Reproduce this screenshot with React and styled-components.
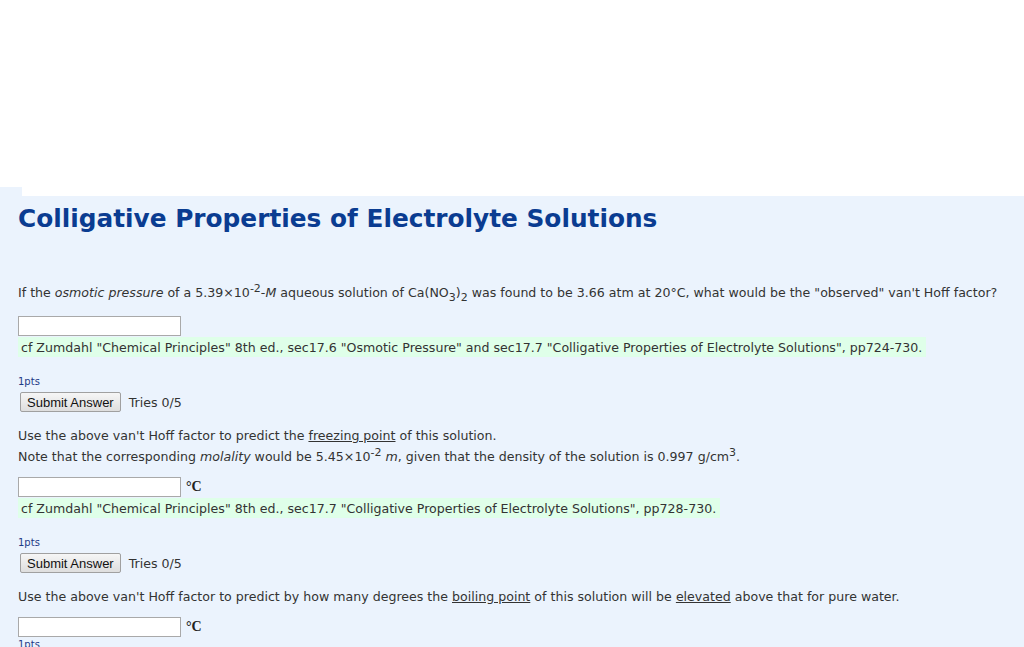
import styled, { createGlobalStyle } from "styled-components";

const Global = createGlobalStyle`
  html, body { margin: 0; padding: 0; background: #fff; }
  body { font-family: "DejaVu Sans", Verdana, sans-serif; color: #333; }
`;

const TopSpace = styled.div`
  height: 187px;
  background: #fff;
`;

const TabRow = styled.div`
  display: flex;
  height: 9px;
  span:first-child { width: 22px; background: #ebf3fd; }
  span:last-child { flex: 1; background: #fff; }
`;

const Panel = styled.div`
  background: #ebf3fd;
  padding: 8px 18px 20px;
  min-height: 500px;
`;

const Title = styled.h1`
  margin: 0 0 49px;
  font-size: 24.8px;
  line-height: 29px;
  font-weight: bold;
  color: #0a3c91;
`;

const Question = styled.div`
  font-size: 12.6px;
  line-height: 21px;
  margin-bottom: ${p => p.$gap || 10}px;
  i { font-style: italic; }
  u { text-decoration: underline; }
  sup, sub { font-size: 11px; line-height: 0; }
`;

const AnswerRow = styled.div`
  display: flex;
  align-items: center;
  gap: 5px;
  height: 20px;
`;

const Input = styled.input`
  width: 159px;
  height: 16px;
  border: 1px solid #a9a9a9;
  background: #fff;
  padding: 1px;
  margin: 0;
`;

const Unit = styled.span`
  font-family: "Liberation Serif", serif;
  font-weight: bold;
  font-size: 14px;
  color: #222;
`;

const Hint = styled.div`
  display: inline-block;
  background: #dfffe9;
  font-size: 12.6px;
  line-height: 20px;
  padding: 1px 4px 0 3px;
  height: 19px;
  margin-top: 1px;
  vertical-align: top;
`;

const Pts = styled.div`
  margin-top: ${p => p.$top ?? 18}px;
  font-size: 10px;
  color: #1d3a86;
  line-height: 14px;
`;

const SubmitRow = styled.div`
  display: flex;
  align-items: center;
  gap: 8px;
  margin: 3px 0 13px 2px;
`;

const Button = styled.button`
  font-family: "Liberation Sans", Arial, sans-serif;
  font-size: 13px;
  color: #111;
  height: 20px;
  padding: 0 6px;
  border: 1px solid #a0a0a0;
  border-radius: 2px;
  background: linear-gradient(#f6f6f6, #dedede);
`;

const Tries = styled.span`
  font-size: 12.6px;
`;

export default function App() {
  return (
    <>
      <Global />
      <TopSpace />
      <TabRow><span /><span /></TabRow>
      <Panel>
        <Title>Colligative Properties of Electrolyte Solutions</Title>

        <Question $gap={13}>
          If the <i>osmotic pressure</i> of a 5.39×10<sup>-2</sup>-<i>M</i> aqueous solution of Ca(NO<sub>3</sub>)<sub>2</sub> was found to be 3.66 atm at 20°C, what would be the "observed" van't Hoff factor?
        </Question>
        <AnswerRow><Input /></AnswerRow>
        <Hint>cf Zumdahl "Chemical Principles" 8th ed., sec17.6 "Osmotic Pressure" and sec17.7 "Colligative Properties of Electrolyte Solutions", pp724-730.</Hint>
        <Pts>1pts</Pts>
        <SubmitRow>
          <Button>Submit Answer</Button>
          <Tries>Tries 0/5</Tries>
        </SubmitRow>

        <Question>
          Use the above van't Hoff factor to predict the <u>freezing point</u> of this solution.<br />
          Note that the corresponding <i>molality</i> would be 5.45×10<sup>-2</sup> <i>m</i>, given that the density of the solution is 0.997 g/cm<sup>3</sup>.
        </Question>
        <AnswerRow><Input /><Unit>°C</Unit></AnswerRow>
        <Hint>cf Zumdahl "Chemical Principles" 8th ed., sec17.7 "Colligative Properties of Electrolyte Solutions", pp728-730.</Hint>
        <Pts>1pts</Pts>
        <SubmitRow>
          <Button>Submit Answer</Button>
          <Tries>Tries 0/5</Tries>
        </SubmitRow>

        <Question>
          Use the above van't Hoff factor to predict by how many degrees the <u>boiling point</u> of this solution will be <u>elevated</u> above that for pure water.
        </Question>
        <AnswerRow><Input /><Unit>°C</Unit></AnswerRow>
        <Pts $top={1}>1pts</Pts>
      </Panel>
    </>
  );
}
